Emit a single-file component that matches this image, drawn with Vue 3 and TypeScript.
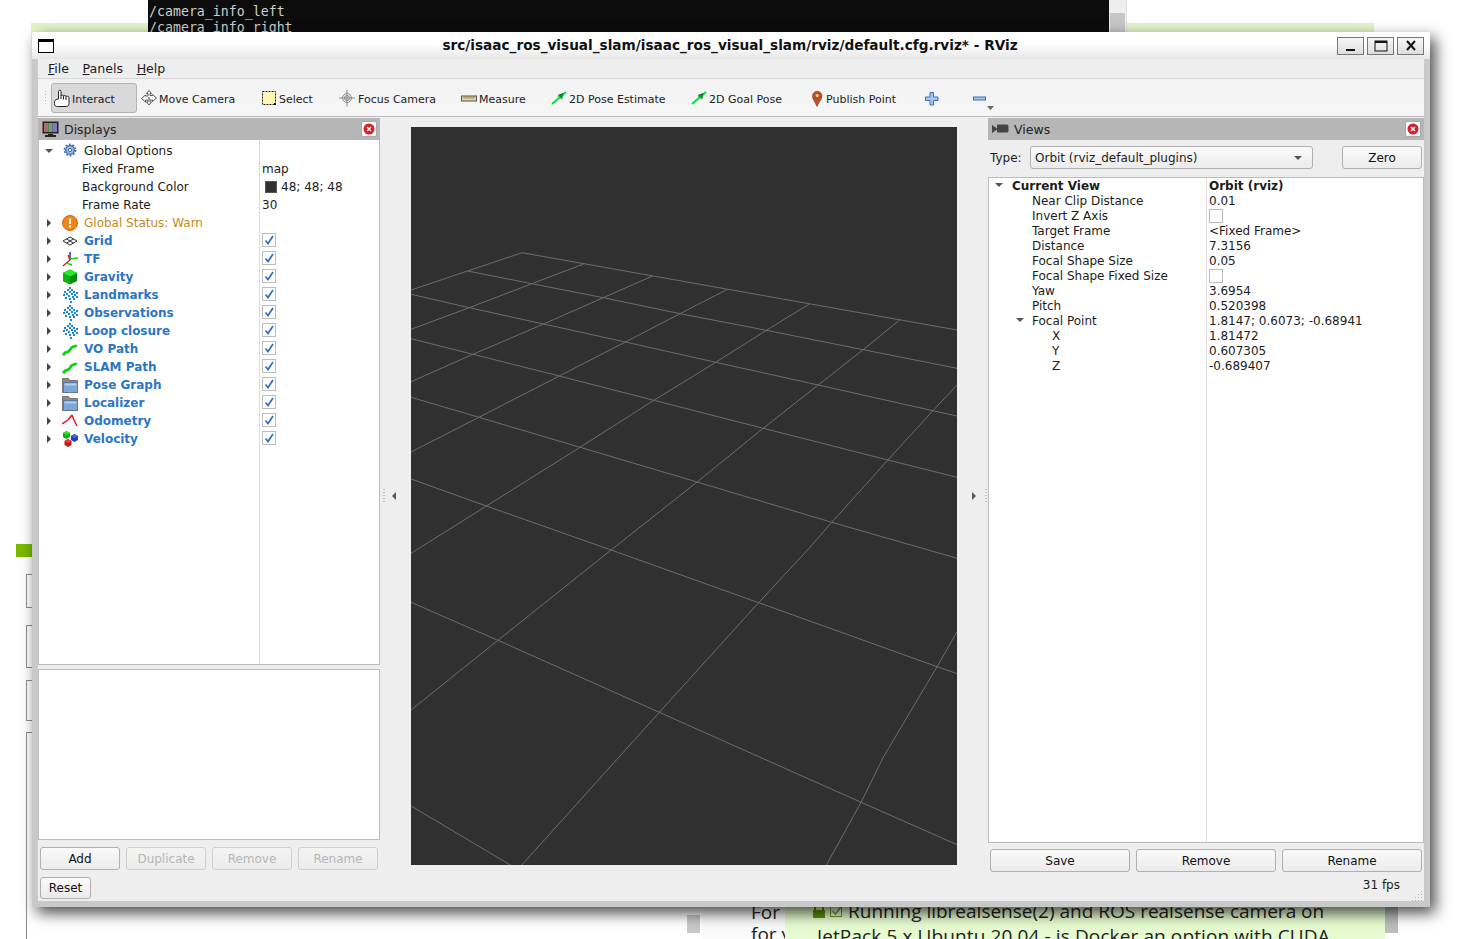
<script setup lang="ts">
type Pt = [number, number]

// grid lines, measured from the reference, relative to the render view
const top = (x: number, y: number): Pt => [x / 2.8 - 6, y / 3 + 113]
const low = (x: number, y: number): Pt => [x / 2.8 - 6, y / 3 + 423]
const poly = (pts: Pt[]) => pts.map(p => `${p[0].toFixed(1)},${p[1].toFixed(1)}`).join(' ')

const gridLines: string[] = [
  [top(328, 38), top(1546, 270)],
  [top(175, 93), top(355, 131), top(555, 173), top(770, 221), top(1012, 271), top(1283, 329), top(1546, 385)],
  [top(17, 163), top(180, 203), top(388, 252), top(617, 306), top(870, 367), top(1157, 435), top(1478, 512), top(1546, 528)],
  [top(17, 296), top(190, 343), top(432, 408), top(697, 481), top(1003, 565), top(1352, 660), top(1546, 712)],
  [top(17, 472), top(207, 532), top(490, 622), top(818, 726), top(1195, 847), top(1546, 955)],
  [top(17, 717), top(228, 798), low(577, 0), low(990, 158), low(1490, 350), low(1546, 371)],
  [low(17, 157), low(260, 271), low(712, 487), low(1277, 757), low(1546, 884)],
  [low(17, 768), low(295, 945)],
  [top(328, 38), top(175, 93), top(17, 150)],
  [top(500, 72), top(355, 131), top(180, 203), top(17, 268)],
  [top(693, 108), top(555, 173), top(388, 252), top(190, 343), top(17, 425)],
  [top(903, 148), top(770, 221), top(617, 306), top(432, 408), top(207, 532), top(17, 636)],
  [top(1132, 192), top(1012, 271), top(870, 367), top(697, 481), top(490, 622), top(228, 798), top(17, 940)],
  [top(1385, 240), top(1283, 329), top(1157, 435), top(1003, 565), top(818, 726), low(577, 0), low(260, 271), low(17, 480)],
  [top(1546, 435), top(1478, 512), top(1352, 660), top(1195, 847), low(1127, 0), low(990, 158), low(712, 487), low(327, 945)],
  [low(1546, 245), low(1490, 350), low(1340, 620), low(1277, 757), low(1180, 945)],
].map(poly)

const tools = [
  { label: 'Interact', icon: 'hand', cls: 'interact' },
  { label: 'Move Camera', icon: 'move', cls: '' },
  { label: 'Select', icon: 'select', cls: '' },
  { label: 'Focus Camera', icon: 'focus', cls: 'focus' },
  { label: 'Measure', icon: 'ruler', cls: '' },
  { label: '2D Pose Estimate', icon: 'arrow', cls: '' },
  { label: '2D Goal Pose', icon: 'arrow', cls: '' },
  { label: 'Publish Point', icon: 'pin', cls: 'publish' },
]

const displays = [
  { name: 'Grid', icon: 'grid' },
  { name: 'TF', icon: 'tf' },
  { name: 'Gravity', icon: 'cube' },
  { name: 'Landmarks', icon: 'points' },
  { name: 'Observations', icon: 'points' },
  { name: 'Loop closure', icon: 'points' },
  { name: 'VO Path', icon: 'path' },
  { name: 'SLAM Path', icon: 'path' },
  { name: 'Pose Graph', icon: 'folder' },
  { name: 'Localizer', icon: 'folder' },
  { name: 'Odometry', icon: 'odom' },
  { name: 'Velocity', icon: 'velocity' },
]

const pointDots: Pt[] = [[7, 0], [5, 2], [9, 2], [2, 4], [7, 4], [11, 4], [14, 5], [4, 6], [9, 6], [1, 7], [12, 7], [6, 8], [3, 10], [10, 9], [14, 9], [7, 11], [11, 11], [8, 14]]

const views = [
  { name: 'Near Clip Distance', value: '0.01', depth: 1 },
  { name: 'Invert Z Axis', check: true, depth: 1 },
  { name: 'Target Frame', value: '<Fixed Frame>', depth: 1 },
  { name: 'Distance', value: '7.3156', depth: 1 },
  { name: 'Focal Shape Size', value: '0.05', depth: 1 },
  { name: 'Focal Shape Fixed Size', check: true, depth: 1 },
  { name: 'Yaw', value: '3.6954', depth: 1 },
  { name: 'Pitch', value: '0.520398', depth: 1 },
  { name: 'Focal Point', value: '1.8147; 0.6073; -0.68941', depth: 1, open: true },
  { name: 'X', value: '1.81472', depth: 2 },
  { name: 'Y', value: '0.607305', depth: 2 },
  { name: 'Z', value: '-0.689407', depth: 2 },
]
</script>

<template>
  <div class="desktop">
    <!-- windows behind rviz -->
    <div class="bg-band"></div>
    <div class="terminal">
      <div class="term-line">/camera_info_left</div>
      <div class="term-line">/camera_info_right</div>
    </div>
    <div class="term-scroll"><div class="term-thumb"></div></div>
    <div class="page-left"></div>
    <div class="page-tab"></div>
    <div class="page-box b1"></div>
    <div class="page-box b2"></div>
    <div class="page-box b3"></div>
    <div class="page-box b4"></div>
    <div class="page-scroll"></div>
    <div class="page-right">
      <div class="for-text">For<br />for y</div>
      <div class="green-note">
        <div class="note-line">
          <svg width="14" height="14" viewBox="0 0 14 14"><path d="M3 6V4a4 3.4 0 0 1 8 0v2" fill="none" stroke="#5d9600" stroke-width="2" /><rect x="1" y="6" width="12" height="8" fill="#5d9600" /></svg>
          <svg width="15" height="14" viewBox="0 0 15 14"><rect x="1.500" y="1.500" width="11" height="11" fill="none" stroke="#6f9d2a" /><path d="M3.500 7l3 3 6-8" fill="none" stroke="#6f9d2a" stroke-width="1.500" /></svg>
          <span>Running librealsense(2) and ROS realsense camera on</span>
        </div>
        <div class="note-line second">JetPack 5.x Ubuntu 20.04 - is Docker an option with CUDA</div>
      </div>
    </div>
    <div class="note-scroll"></div>

    <div class="window">
      <div class="titlebar">
        <div class="win-icon"></div>
        <div class="title">src/isaac_ros_visual_slam/isaac_ros_visual_slam/rviz/default.cfg.rviz* - RViz</div>
        <div class="win-buttons">
          <div class="win-btn"><svg width="12" height="12" viewBox="0 0 12 12"><rect x="1" y="9" width="9" height="2" fill="#111" /></svg></div>
          <div class="win-btn"><svg width="14" height="12" viewBox="0 0 14 12"><rect x="1" y="1" width="12" height="10" fill="none" stroke="#111" /><rect x="1" y="1" width="12" height="2" fill="#111" /></svg></div>
          <div class="win-btn"><svg width="12" height="12" viewBox="0 0 12 12"><path d="M2 1l8 9M10 1l-8 9" stroke="#111" stroke-width="2" /></svg></div>
        </div>
      </div>

      <div class="frame">
        <div class="menubar">
          <span class="menu"><u>F</u>ile</span>
          <span class="menu"><u>P</u>anels</span>
          <span class="menu"><u>H</u>elp</span>
        </div>

        <div class="toolbar">
          <div class="grip"></div>
          <div class="tools">
            <div v-for="t in tools" :key="t.label" class="tool" :class="t.cls">
              <svg class="tool-icon" width="16" height="18" viewBox="0 0 16 18">
                <g v-if="t.icon === 'hand'" fill="#fff" stroke="#222" stroke-width="1" stroke-linejoin="round">
                  <path d="M4.500 10V2.500c0-1.800 2.500-1.800 2.500 0V7c0-1.300 2.500-1.300 2.500 0v.5c0-1.300 2.500-1.300 2.500 0V8c0-1.300 3-1.300 3 .5v6c0 2-1 3-2.500 3H3.500C1.500 17.500.5 16.500.5 14.500v-2c0-1.500 2.500-2.500 4-2.500z" />
                  <path d="M7 7v3M9.500 7.500v3M12 8v3" fill="none" />
                </g>
                <g v-else-if="t.icon === 'move'" fill="#fff" stroke="#555" stroke-width="1" transform="translate(0 1)">
                  <path d="M8 .5l2.500 3H9v2h2.500v-1l4 3.500-4 3.500v-1.500H9v2h1.500l-2.500 3-2.500-3H7v-2H4.500V12L.5 8.500l4-3.500v1H7V3.500H5.500z" />
                  <path d="M7 7h2v3H7z" fill="#999" stroke="none" />
                </g>
                <g v-else-if="t.icon === 'select'">
                  <rect x="1.500" y="2.500" width="13" height="13" fill="#fdf6b0" stroke="#222" stroke-dasharray="2 1" />
                  <rect x="13" y="14" width="2" height="2" fill="#111" />
                </g>
                <g v-else-if="t.icon === 'focus'" fill="none" stroke="#888">
                  <circle cx="8" cy="9" r="4.500" fill="#eee" />
                  <circle cx="8" cy="9" r="2.500" />
                  <path d="M8 .5v17M0 9h16" />
                </g>
                <g v-else-if="t.icon === 'ruler'">
                  <rect x="0.500" y="7" width="15" height="5" fill="#e3d9a0" stroke="#555" />
                  <path d="M3 7.500v2M5 7.500v2M7 7.500v2M9 7.500v2M11 7.500v2M13 7.500v2" stroke="#7d7448" />
                </g>
                <g v-else-if="t.icon === 'arrow'" transform="translate(0 -1)">
                  <path d="M1 16L15 4" stroke="#00e040" stroke-width="2" />
                  <path d="M7 7l4 4 1.500-6z" fill="#111" />
                  <path d="M6 8l5 4 2-7z" fill="#00d838" opacity=".65" />
                </g>
                <g v-else-if="t.icon === 'pin'" transform="translate(0 .5)">
                  <path d="M7 17C5 12 2.500 10 2.500 6.500a4.700 4.700 0 0 1 9.500 0C12 10 9 12 7 17z" fill="#b9522a" stroke="#7b3a20" stroke-width=".6" />
                  <circle cx="7.200" cy="6" r="1.600" fill="#f2c8a0" />
                </g>
              </svg>
              <span class="tool-label">{{ t.label }}</span>
            </div>
            <div class="tool small">
              <svg width="14" height="14" viewBox="0 0 14 14"><path d="M5 .5h3.500V5H13v3.500H8.500V13H5V8.500H.5V5H5z" fill="#a8c4ea" stroke="#3b70b5" /></svg>
            </div>
            <div class="tool small">
              <svg width="14" height="14" viewBox="0 0 14 14"><rect x=".5" y="5" width="12" height="3" fill="#a8c4ea" stroke="#3b70b5" /></svg>
            </div>
            <svg class="more" width="7" height="4" viewBox="0 0 7 4"><path d="M0 0h7L3.500 4z" fill="#666" /></svg>
          </div>
        </div>

        <div class="main">
          <div class="dock left-dock">
            <div class="dock-head">
              <svg width="17" height="16" viewBox="0 0 17 16">
                <rect x="0.500" y="0.500" width="16" height="12" fill="#222" />
                <rect x="2" y="2" width="4.500" height="9" fill="#b56a6a" />
                <rect x="6.500" y="2" width="4" height="9" fill="#6aa86a" />
                <rect x="10.500" y="2" width="4.500" height="9" fill="#7a7ac8" />
                <rect x="6" y="13" width="5" height="1" fill="#222" />
                <rect x="3" y="14" width="11" height="2" fill="#222" />
              </svg>
              <span>Displays</span>
              <div class="close-btn"><svg width="12" height="12" viewBox="0 0 12 12"><circle cx="6" cy="6" r="5.500" fill="#d3202e" /><path d="M4 4l4 4M8 4l-4 4" stroke="#fff" stroke-width="1.400" /></svg></div>
            </div>

            <div class="tree display-tree">
              <div class="row">
                <div class="cell-name"><i class="arrow open"></i>
                  <svg class="dicon" width="16" height="16" viewBox="0 0 16 16">
                    <circle cx="8" cy="7" r="4.300" fill="#9dbcea" stroke="#3a6db5" stroke-width="1.300" />
                    <circle cx="8" cy="7" r="5.600" fill="none" stroke="#3a6db5" stroke-width="1.600" stroke-dasharray="1.800 1.720" />
                    <circle cx="8" cy="7" r="1.700" fill="#fff" stroke="#3a6db5" />
                  </svg>
                  <span>Global Options</span></div>
                <div class="cell-value"></div>
              </div>
              <div class="row"><div class="cell-name child">Fixed Frame</div><div class="cell-value">map</div></div>
              <div class="row"><div class="cell-name child">Background Color</div><div class="cell-value"><i class="swatch"></i>48; 48; 48</div></div>
              <div class="row"><div class="cell-name child">Frame Rate</div><div class="cell-value">30</div></div>
              <div class="row">
                <div class="cell-name warn"><i class="arrow"></i>
                  <svg class="dicon" width="16" height="16" viewBox="0 0 16 16">
                    <circle cx="8" cy="8" r="7.500" fill="#ef8418" stroke="#c9690f" />
                    <rect x="7" y="3.500" width="2" height="5.500" fill="#fff" />
                    <rect x="7" y="10.500" width="2" height="2" fill="#fff" />
                  </svg>
                  <span>Global Status: Warn</span></div>
                <div class="cell-value"></div>
              </div>
              <div v-for="d in displays" :key="d.name" class="row">
                <div class="cell-name plugin"><i class="arrow"></i>
                  <svg class="dicon" width="16" height="16" viewBox="0 0 16 16">
                    <g v-if="d.icon === 'grid'" fill="none" stroke="#333">
                      <path d="M1 8l7-4 7 4-7 4z" />
                      <path d="M4.500 6l7 4M11.500 6l-7 4" />
                    </g>
                    <g v-else-if="d.icon === 'tf'" stroke-width="1.500" fill="none">
                      <path d="M8 9V1" stroke="#1a2ce0" />
                      <path d="M8 8l8-1" stroke="#10d020" />
                      <path d="M8 9l-7 6" stroke="#e02020" />
                      <path d="M4 12l6 2" stroke="#10d020" />
                      <path d="M6 4l2 5" stroke="#e02020" />
                    </g>
                    <g v-else-if="d.icon === 'cube'">
                      <path d="M8 .5l7 3.500v8l-7 3.500-7-3.500v-8z" fill="#0a8c0a" />
                      <path d="M8 .5l7 3.500-7 3.500-7-3.500z" fill="#20f020" />
                      <path d="M1 4l7 3.500v8l-7-3.500z" fill="#0fb30f" />
                    </g>
                    <g v-else-if="d.icon === 'points'" fill="#1c86e0">
                      <rect v-for="(p, i) in pointDots" :key="i" :x="p[0]" :y="p[1]" width="2" height="2" />
                    </g>
                    <path v-else-if="d.icon === 'path'" d="M1.500 14.500c.5-3 2.500-3 4-3.500 3-1 2.500-4 5-5 1.500-.6 2.500 0 4-2" fill="none" stroke="#0bd30b" stroke-width="2.800" />
                    <g v-else-if="d.icon === 'folder'">
                      <path d="M.5 15.500V1.500h6l1.500 2h7.500v12z" fill="#8a8a8a" stroke="#555" stroke-width=".7" />
                      <rect x="1.500" y="5.500" width="14" height="10" fill="#7ea6d6" stroke="#4c6f9c" stroke-width=".7" />
                      <rect x="2.500" y="6.500" width="12" height="2" fill="#b5cde8" />
                    </g>
                    <g v-else-if="d.icon === 'odom'" fill="none" stroke="#e01a1a" stroke-width="1.500">
                      <path d="M0 11l6-4M6 7l4-5" />
                      <path d="M10 2l2 5M12 7l3 6" />
                    </g>
                    <g v-else-if="d.icon === 'velocity'">
                      <path d="M4.500 0l3.500 2v4l-3.500 2-3.500-2V2z" fill="#0fae0f" />
                      <path d="M4.500 0l3.500 2-3.500 2L1 2z" fill="#28e828" />
                      <path d="M12.500 3l3.500 2v4l-3.500 2-3.500-2V5z" fill="#1f3fc4" />
                      <path d="M12.500 3l3.500 2-3.500 2L9 5z" fill="#4668ec" />
                      <path d="M6 8l3.500 2v4L6 16l-3.500-2v-4z" fill="#c21818" />
                      <path d="M6 8l3.500 2L6 12l-3.500-2z" fill="#ea3c3c" />
                    </g>
                  </svg>
                  <span>{{ d.name }}</span></div>
                <div class="cell-value"><i class="check on"><svg width="12" height="12" viewBox="0 0 12 12"><path d="M2.500 6.500l2.500 3L10 2" fill="none" stroke="#2d6fc0" stroke-width="1.700" /></svg></i></div>
              </div>
            </div>

            <div class="h-handle"></div>
            <div class="help-box"></div>

            <div class="btn-row">
              <button class="btn">Add</button>
              <button class="btn" disabled>Duplicate</button>
              <button class="btn" disabled>Remove</button>
              <button class="btn" disabled>Rename</button>
            </div>
            <div class="reset-row"><button class="btn reset">Reset</button></div>
          </div>

          <div class="collapse left"><i class="dots"></i><i class="tri-left"></i></div>

          <div class="render">
            <svg width="546" height="738" viewBox="0 0 546 738">
              <polyline v-for="(l, i) in gridLines" :key="i" :points="l" fill="none" stroke="#6d6d6d" stroke-width="1" />
            </svg>
          </div>

          <div class="collapse right"><i class="tri-right"></i><i class="dots"></i></div>

          <div class="dock right-dock">
            <div class="dock-head">
              <svg width="17" height="16" viewBox="0 0 17 16">
                <path d="M0 4l5 3.500V4.500C5 4 5.500 3.500 6 3.500h9c1 0 1.500 1 1.500 2v4c0 1-.5 2-1.500 2H6c-.5 0-1-.5-1-1V8.500L0 12z" fill="#444" />
              </svg>
              <span>Views</span>
              <div class="close-btn"><svg width="12" height="12" viewBox="0 0 12 12"><circle cx="6" cy="6" r="5.500" fill="#d3202e" /><path d="M4 4l4 4M8 4l-4 4" stroke="#fff" stroke-width="1.400" /></svg></div>
            </div>

            <div class="type-row">
              <span class="type-label">Type:</span>
              <div class="combo"><span>Orbit (rviz_default_plugins)</span><i class="combo-arrow"></i></div>
              <button class="btn zero">Zero</button>
            </div>

            <div class="tree view-tree">
              <div class="vrow head">
                <div class="vname"><i class="arrow open"></i><span>Current View</span></div>
                <div class="vvalue">Orbit (rviz)</div>
              </div>
              <div v-for="v in views" :key="v.name" class="vrow">
                <div class="vname" :class="'depth' + v.depth"><i v-if="v.open" class="arrow open"></i><span>{{ v.name }}</span></div>
                <div class="vvalue"><i v-if="v.check" class="check"></i>{{ v.value }}</div>
              </div>
            </div>

            <div class="btn-row views-btns">
              <button class="btn">Save</button>
              <button class="btn">Remove</button>
              <button class="btn">Rename</button>
            </div>
          </div>
        </div>

        <div class="fps">31 fps</div>
        <svg class="size-grip" width="12" height="10" viewBox="0 0 12 10" fill="#b8b8b8">
          <rect x="9" y="0" width="1" height="1" /><rect x="6" y="3" width="1" height="1" /><rect x="9" y="3" width="1" height="1" />
          <rect x="3" y="6" width="1" height="1" /><rect x="6" y="6" width="1" height="1" /><rect x="9" y="6" width="1" height="1" />
          <rect x="0" y="9" width="1" height="1" /><rect x="3" y="9" width="1" height="1" /><rect x="6" y="9" width="1" height="1" /><rect x="9" y="9" width="1" height="1" />
        </svg>
      </div>
    </div>
  </div>
</template>

<style scoped>
.desktop {
  position: relative;
  width: 1462px;
  height: 939px;
  overflow: hidden;
  background: #fff;
  font-family: "DejaVu Sans", sans-serif;
  font-size: 12px;
  color: #1c1c1c;
}

/* windows behind */
.bg-band {
  position: absolute;
  left: 31px;
  top: 23px;
  width: 1343px;
  height: 20px;
  background: #e3f4c9;
}
.terminal {
  position: absolute;
  left: 148px;
  top: 0;
  width: 961px;
  height: 40px;
  background: #0c0c0c;
  color: #cfcfcf;
  font-family: "DejaVu Sans Mono", monospace;
  font-size: 13.250px;
  line-height: 16px;
  padding: 4px 0 0 1px;
  box-sizing: border-box;
}
.term-scroll {
  position: absolute;
  left: 1109px;
  top: 0;
  width: 18px;
  height: 40px;
  background: #eee;
  border-right: 1px solid #ddd;
  box-sizing: border-box;
}
.term-thumb {
  margin: 13px 1px 0;
  height: 27px;
  background: #c6c6c6;
}
.page-left {
  position: absolute;
  left: 16px;
  top: 544px;
  width: 30px;
  height: 395px;
  background: #fff;
}
.page-tab {
  position: absolute;
  left: 16px;
  top: 544px;
  width: 20px;
  height: 13px;
  background: #7ab800;
}
.page-box {
  position: absolute;
  left: 26px;
  width: 20px;
  border: 1px solid #8e8e8e;
  box-sizing: border-box;
}
.b1 { top: 574px; height: 34px; }
.b2 { top: 625px; height: 43px; }
.b3 { top: 680px; height: 41px; }
.b4 { top: 732px; height: 240px; border-right: 0; }
.page-scroll {
  position: absolute;
  left: 687px;
  top: 915px;
  width: 13px;
  height: 18px;
  background: #c8c8c8;
}
.page-right {
  position: absolute;
  left: 703px;
  top: 899px;
  width: 682px;
  height: 40px;
  display: flex;
  background: #fafafa;
  overflow: hidden;
  font-family: "Open Sans", sans-serif;
  font-size: 19px;
  color: #222;
}
.for-text {
  width: 82px;
  padding: 2px 0 0 48px;
  box-sizing: border-box;
  line-height: 22px;
  white-space: nowrap;
  overflow: hidden;
}
.green-note {
  width: 600px;
  background: #e6fbcf;
  padding-left: 27px;
  box-sizing: border-box;
  line-height: 24px;
  white-space: nowrap;
}
.note-line {
  display: flex;
  align-items: center;
  gap: 3px;
  height: 24px;
}
.note-line svg + svg {
  margin-right: 1px;
}
.note-line.second {
  margin-left: 5px;
  margin-top: 1px;
  letter-spacing: 0.110px;
}
.note-scroll {
  position: absolute;
  left: 1385px;
  top: 900px;
  width: 13px;
  height: 33px;
  background: #bdbdbd;
}

/* rviz window */
.window {
  position: absolute;
  left: 32px;
  top: 32px;
  width: 1398px;
  height: 875px;
  display: flex;
  flex-direction: column;
  border-radius: 2px 2px 0 0;
  box-shadow: 5px 6px 15px rgba(0, 0, 0, 0.72);
}
.titlebar {
  height: 27px;
  flex: none;
  display: flex;
  align-items: center;
  padding: 0 6px;
  background: linear-gradient(#fff 0, #fff 45%, #e6e6e6 100%);
  border-radius: 2px 2px 0 0;
  position: relative;
}
.win-icon {
  width: 16px;
  height: 14px;
  box-sizing: border-box;
  border: 1px solid #000;
  border-top-width: 3px;
  background: #fff;
}
.title {
  position: absolute;
  left: 0;
  right: 2px;
  top: 5px;
  text-align: center;
  font-weight: 700;
  font-size: 13.650px;
  line-height: 16px;
  color: #111;
}
.win-buttons {
  margin-left: auto;
  display: flex;
  gap: 3px;
  position: relative;
}
.win-btn {
  width: 27px;
  height: 18px;
  box-sizing: border-box;
  border: 1px solid #777;
  background: linear-gradient(#f7f7f7, #dedede);
  display: flex;
  align-items: center;
  justify-content: center;
}
.frame {
  flex: 1;
  min-height: 0;
  position: relative;
  border: solid #c9c9c9;
  border-width: 0 6px 6px;
  background: #eeeeee;
  display: flex;
  flex-direction: column;
}
.menubar {
  height: 19px;
  flex: none;
  display: flex;
  align-items: center;
  padding-left: 10px;
  gap: 13.500px;
  font-size: 12.600px;
  border-bottom: 1px solid #d6d6d6;
}
.toolbar {
  height: 37px;
  flex: none;
  display: flex;
  align-items: center;
  padding-left: 6px;
  background: linear-gradient(#f2f2f2, #f6f6f6);
  border-bottom: 1px solid #bcbcbc;
  box-sizing: content-box;
}
.grip {
  width: 3px;
  height: 16px;
  margin-right: 4px;
  background-image: radial-gradient(#bbb 40%, transparent 45%);
  background-size: 3px 3px;
}
.tools {
  display: grid;
  grid-template-columns: 88px 120px 78px 122px 90px 140px 119px 115px 48px 16px 8px;
  align-items: center;
  height: 30px;
  position: relative;
}
.tool {
  display: flex;
  align-items: center;
  gap: 2px;
  height: 30px;
  padding-left: 2px;
  font-size: 11px;
  color: #222;
  box-sizing: border-box;
  white-space: nowrap;
}
.tool.small {
  padding-top: 2px;
}
.tool-label {
  margin-top: 4px;
}
.tool-icon {
  flex: none;
}
.tool.interact {
  width: 86px;
  padding-left: 2px;
  background: #d9d9d9;
  border: 1px solid #b4b4b4;
  border-radius: 3px;
}
.tool.focus {
  gap: 3px;
}
.tool.publish {
  gap: 0;
}
.more {
  align-self: end;
  margin-bottom: 3px;
}
.main {
  flex: 1;
  min-height: 0;
  display: flex;
  padding-top: 1px;
}
.dock {
  flex: none;
  display: flex;
  flex-direction: column;
}
.left-dock {
  width: 342px;
}
.right-dock {
  width: 436px;
}
.dock-head {
  height: 22px;
  flex: none;
  background: #b6b6b6;
  display: flex;
  align-items: center;
  padding-left: 4px;
  gap: 5px;
  font-size: 12.500px;
  color: #222;
}
.close-btn {
  margin-left: auto;
  margin-right: 3px;
  width: 16px;
  height: 16px;
  box-sizing: border-box;
  background: #fafafa;
  border: 1px solid #a8a8a8;
  border-radius: 2px;
  display: flex;
  align-items: center;
  justify-content: center;
}
.tree {
  background: #fff;
  border: 1px solid #bcbcbc;
  box-sizing: border-box;
}
.display-tree {
  height: 525px;
  flex: none;
  border-top: 0;
  padding-top: 2px;
  background: linear-gradient(#dcdcdc, #dcdcdc) 220px 0 / 1px 100% no-repeat #fff;
}
.row {
  display: grid;
  grid-template-columns: 220px 1fr;
  height: 18px;
  align-items: center;
  font-size: 12px;
}
.row .check {
  margin-top: -2px;
}
.cell-name {
  display: flex;
  align-items: center;
  padding-left: 5px;
  white-space: nowrap;
}
.cell-name.child {
  padding-left: 43px;
}
.cell-name.warn {
  color: #c68a22;
}
.cell-name.plugin {
  color: #2a76c4;
  font-weight: 700;
}
.cell-value {
  padding-left: 3px;
  display: flex;
  align-items: center;
}
.dicon {
  flex: none;
  margin-right: 6px;
}
.arrow {
  flex: none;
  width: 10px;
  height: 9px;
  margin-right: 8px;
  position: relative;
}
.arrow::before {
  content: "";
  position: absolute;
  left: 3px;
  top: 0;
  border: solid transparent;
  border-width: 4px 0 4px 4px;
  border-left-color: #444;
}
.arrow.open::before {
  left: 1px;
  top: 2px;
  border-width: 4px 4px 0;
  border-color: #555 transparent transparent;
}
.swatch {
  width: 10px;
  height: 10px;
  margin: 0 4px 0 3px;
  background: #303030;
  border: 1px solid #555;
}
.check {
  width: 14px;
  height: 14px;
  flex: none;
  box-sizing: border-box;
  border: 1px solid #bdbdbd;
  background: #fff;
  display: inline-flex;
  align-items: center;
  justify-content: center;
}
.h-handle {
  height: 4px;
  flex: none;
  background: radial-gradient(#c4c4c4 40%, transparent 45%) center / 2px 2px no-repeat;
}
.help-box {
  height: 171px;
  flex: none;
  box-sizing: border-box;
  background: #fff;
  border: 1px solid #bcbcbc;
}
.btn-row {
  display: flex;
  gap: 6px;
  padding: 7px 2px 0;
}
.btn {
  flex: 1;
  height: 23px;
  padding: 0;
  box-sizing: border-box;
  font-family: inherit;
  font-size: 12px;
  color: #111;
  background: linear-gradient(#fafafa, #ebebeb);
  border: 1px solid #b0b0b0;
  border-radius: 3px;
}
.btn:disabled {
  color: #b5b5b5;
  background: linear-gradient(#f3f3f3, #ececec);
  border-color: #cecece;
}
.reset-row {
  padding: 7px 2px 0;
}
.btn.reset {
  width: 51px;
  height: 22px;
  flex: none;
}
.collapse {
  flex: none;
  width: 31px;
  height: 738px;
  margin-top: 9px;
  box-sizing: border-box;
  display: flex;
  align-items: center;
}
.collapse.left {
  padding-left: 3px;
  gap: 7px;
}
.collapse.right {
  padding-left: 15px;
  gap: 9px;
}
.dots {
  width: 2px;
  height: 16px;
  background-image: radial-gradient(#bdbdbd 50%, transparent 55%);
  background-size: 2px 3px;
}
.tri-left,
.tri-right {
  width: 0;
  height: 0;
  border: solid transparent;
}
.tri-left {
  border-width: 4px 4px 4px 0;
  border-right-color: #555;
}
.tri-right {
  border-width: 4px 0 4px 4px;
  border-left-color: #555;
}
.render {
  flex: none;
  width: 546px;
  height: 738px;
  margin-top: 9px;
  background: #303030;
}
.render svg {
  display: block;
}
.type-row {
  display: flex;
  align-items: center;
  height: 23px;
  margin-top: 6px;
  padding: 0 2px;
}
.type-label {
  width: 40px;
  flex: none;
}
.combo {
  width: 283px;
  height: 23px;
  box-sizing: border-box;
  border: 1px solid #b0b0b0;
  border-radius: 3px;
  background: linear-gradient(#fafafa, #ebebeb);
  display: flex;
  align-items: center;
  padding-left: 4px;
}
.combo-arrow {
  margin-left: auto;
  margin-right: 10px;
  border: solid transparent;
  border-width: 4px 4px 0;
  border-top-color: #555;
}
.btn.zero {
  flex: none;
  width: 80px;
  margin-left: 29px;
}
.view-tree {
  height: 666px;
  flex: none;
  margin-top: 8px;
  background: linear-gradient(#dcdcdc, #dcdcdc) 217px 0 / 1px 100% no-repeat #fff;
}
.vrow {
  display: grid;
  grid-template-columns: 217px 1fr;
  height: 15px;
  align-items: center;
  white-space: nowrap;
}
.vrow.head {
  font-weight: 700;
}
.vname {
  display: flex;
  align-items: center;
  padding-left: 5px;
}
.vname.depth1 {
  padding-left: 43px;
}
.vname.depth1 .arrow {
  margin-left: -17px;
  margin-right: 7px;
}
.vname.depth2 {
  padding-left: 63px;
}
.vvalue {
  padding-left: 3px;
  display: flex;
  align-items: center;
}
.views-btns {
  padding-top: 6px;
}
.fps {
  position: absolute;
  right: 24px;
  bottom: 9px;
  font-size: 12px;
}
.size-grip {
  position: absolute;
  right: 0;
  bottom: 0;
}
</style>

<style>
html, body {
  margin: 0;
  background: #fff;
}
</style>
